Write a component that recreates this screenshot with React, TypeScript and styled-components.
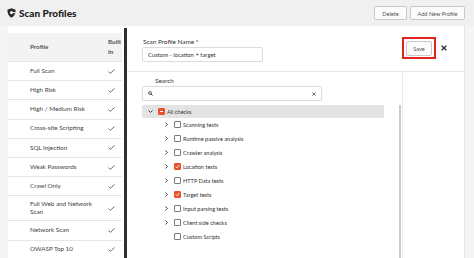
import React from 'react';
import styled, { createGlobalStyle, css } from 'styled-components';

const GlobalStyle = createGlobalStyle`
    html, body {
        margin: 0;
        padding: 0;
        background: #f5f5f5;
    }
    * {
        box-sizing: border-box;
    }
    body {
        font-family: Lato, 'Liberation Sans', sans-serif;
        color: #333;
    }
`;

const Page = styled.div`
    width: 474px;
    height: 258px;
    display: flex;
    flex-direction: column;
    overflow: hidden;
`;

const Header = styled.header`
    height: 26px;
    flex-shrink: 0;
    display: flex;
    align-items: center;
    justify-content: space-between;
    padding: 0 9px 0 7px;
    background: #f0f0f0;
`;

const Title = styled.h1`
    margin: 0;
    display: flex;
    align-items: center;
    gap: 3px;
    font-size: 10px;
    font-weight: 900;
    color: #222;
`;

const HeaderActions = styled.div`
    display: flex;
    gap: 3px;
`;

const Button = styled.button<{ $width: number; $height?: number }>`
    display: block;
    width: ${({ $width }) => $width}px;
    height: ${({ $height }) => $height ?? 14}px;
    padding: 0;
    font-family: inherit;
    font-size: 5.6px;
    color: #555;
    background: #fbfbfb;
    border: 1px solid #c9c9c9;
    border-radius: 2px;
`;

const Main = styled.main`
    flex: 1;
    display: flex;
    padding-left: 8px;
    min-height: 0;
`;

const ProfilePanel = styled.section`
    width: 116px;
    flex-shrink: 0;
    padding: 7px 2px 0 0;
    background: #fff;
`;

const TableRow = styled.div<{ $head?: boolean }>`
    display: flex;
    align-items: center;
    min-height: 19.2px;
    padding: 3.5px 0;
    border-bottom: 1px solid #e6e6e6;
    font-size: 6.3px;
    line-height: 8.5px;
    color: #444;
    ${({ $head }) =>
        $head &&
        css`
            min-height: 29px;
            background: #f3f3f3;
            font-weight: 700;
            line-height: 10px;
            color: #555;
        `}
`;

const NameCell = styled.div`
    flex: 1;
    padding-left: 22px;
    padding-right: 8px;
`;

const BuiltCell = styled.div`
    width: 14px;
    flex-shrink: 0;
    display: flex;
    align-items: center;
`;

const Divider = styled.div`
    width: 3px;
    margin-top: 2px;
    flex-shrink: 0;
    background: #2e2e2e;
`;

const Editor = styled.section`
    flex: 1;
    display: flex;
    flex-direction: column;
    margin-right: 9px;
    background: #fff;
    border-right: 1px solid #e6e6e6;
`;

const EditorTop = styled.div`
    height: 46px;
    flex-shrink: 0;
    display: flex;
    justify-content: space-between;
    padding: 12px 17px 0 15px;
    border-bottom: 1px solid #e6e6e6;
`;

const FieldLabel = styled.label<{ $indent?: number }>`
    display: block;
    margin-left: ${({ $indent }) => $indent ?? 1}px;
    font-size: 6.4px;
    line-height: 8px;
    color: #333;
`;

const TextBox = styled.div<{ $width: number }>`
    width: ${({ $width }) => $width}px;
    height: 15px;
    margin-top: 1px;
    display: flex;
    align-items: center;
    gap: 3px;
    padding: 0 5px;
    border: 1px solid #dcdcdc;
    border-radius: 2px;
    font-size: 5.9px;
    color: #333;
`;

const SaveArea = styled.div`
    display: flex;
    align-items: flex-start;
    gap: 5px;
    margin-top: -1px;
`;

const Highlight = styled.div`
    display: flex;
    padding: 1.5px 2px;
    border: 2px solid #e2231a;
`;

const CloseButton = styled.div`
    margin-top: 8px;
    display: flex;
`;

const EditorBody = styled.div`
    flex: 1;
    display: flex;
    min-height: 0;
`;

const TreeColumn = styled.div`
    width: 276px;
    flex-shrink: 0;
    display: flex;
    flex-direction: column;
    padding: 5px 0 0 15px;
    border-right: 1px solid #ececec;
`;

const ClearIcon = styled.span`
    margin-left: auto;
    display: flex;
`;

const TreeBox = styled.div`
    flex: 1;
    margin: 4px 1px 0 0;
    padding: 0 15px 0 0;
    border-right: 2px solid #cbcbcb;
`;

const TreeRow = styled.div<{ $level: number; $selected?: boolean }>`
    display: flex;
    align-items: center;
    height: ${({ $level }) => ($level === 0 ? 13 : 13.9)}px;
    padding-left: ${({ $level }) => 4 + $level * 16}px;
    font-size: 5.6px;
    color: #333;
    border-radius: 1px;
    ${({ $selected }) =>
        $selected &&
        css`
            background: #e3e3e3;
        `}
`;

const Chevron = styled.span`
    width: 8px;
    flex-shrink: 0;
    display: flex;
    justify-content: center;
    margin-right: 4px;
`;

const Box = styled.span<{ $on?: boolean }>`
    width: 7px;
    height: 7px;
    flex-shrink: 0;
    display: flex;
    align-items: center;
    justify-content: center;
    margin-right: 2px;
    border: 1px solid #7a7a7a;
    border-radius: 1px;
    background: #fff;
    ${({ $on }) =>
        $on &&
        css`
            border-color: #e8532b;
            background: #e8532b;
        `}
`;

const SideColumn = styled.div`
    flex: 1;
`;

const profiles = [
    'Full Scan',
    'High Risk',
    'High / Medium Risk',
    'Cross-site Scripting',
    'SQL Injection',
    'Weak Passwords',
    'Crawl Only',
    'Full Web and Network Scan',
    'Network Scan',
    'OWASP Top 10',
];

type Check = { label: string; checked?: boolean; leaf?: boolean };

const checks: Check[] = [
    { label: 'Scanning tests' },
    { label: 'Runtime passive analysis' },
    { label: 'Crawler analysis' },
    { label: 'Location tests', checked: true },
    { label: 'HTTP Data tests' },
    { label: 'Target tests', checked: true },
    { label: 'Input parsing tests' },
    { label: 'Client side checks' },
    { label: 'Custom Scripts', leaf: true },
];

const ShieldIcon = () => (
    <svg width='9' height='10' viewBox='0 0 9 10'>
        <path d='M4.5 0.3 L8.6 1.8 C8.6 5.6 7.2 8.4 4.5 9.7 C1.8 8.4 0.4 5.6 0.4 1.8 Z' fill='#2a2a2a' />
        <circle cx='4.5' cy='4.6' r='1.6' fill='#f0f0f0' />
        <path d='M4.5 4.6 L8 4.6' stroke='#f0f0f0' strokeWidth='1' />
    </svg>
);

const Tick = () => (
    <svg width='7' height='5' viewBox='0 0 7 5'>
        <polyline points='0.5,2.6 2.4,4.3 6.5,0.5' fill='none' stroke='#444' strokeWidth='0.8' />
    </svg>
);

const XIcon = ({ size, weight }: { size: number; weight: number }) => (
    <svg width={size} height={size} viewBox='0 0 6 6'>
        <path d='M0.6 0.6 L5.4 5.4 M5.4 0.6 L0.6 5.4' stroke='#222' strokeWidth={weight} />
    </svg>
);

const SearchIcon = () => (
    <svg width='5' height='5' viewBox='0 0 5 5'>
        <circle cx='2' cy='2' r='1.4' fill='none' stroke='#333' strokeWidth='0.8' />
        <path d='M3 3 L4.6 4.6' stroke='#333' strokeWidth='0.9' />
    </svg>
);

const ChevronRight = () => (
    <svg width='3' height='5' viewBox='0 0 3 5'>
        <polyline points='0.5,0.5 2.4,2.5 0.5,4.5' fill='none' stroke='#333' strokeWidth='0.9' />
    </svg>
);

const ChevronDown = () => (
    <svg width='5' height='3' viewBox='0 0 5 3'>
        <polyline points='0.5,0.5 2.5,2.4 4.5,0.5' fill='none' stroke='#333' strokeWidth='0.9' />
    </svg>
);

const CheckMark = () => (
    <svg width='5' height='5' viewBox='0 0 5 5'>
        <polyline points='0.8,2.6 2,3.8 4.2,1' fill='none' stroke='#fff' strokeWidth='0.9' />
    </svg>
);

const Minus = () => (
    <svg width='5' height='5' viewBox='0 0 5 5'>
        <path d='M1 2.5 L4 2.5' stroke='#fff' strokeWidth='1' />
    </svg>
);

const App: React.FC = () => (
    <>
        <GlobalStyle />
        <Page>
            <Header>
                <Title>
                    <ShieldIcon />
                    Scan Profiles
                </Title>
                <HeaderActions>
                    <Button $width={33}>Delete</Button>
                    <Button $width={55}>Add New Profile</Button>
                </HeaderActions>
            </Header>
            <Main>
                <ProfilePanel>
                    <TableRow $head>
                        <NameCell>Profile</NameCell>
                        <BuiltCell>
                            Built
                            <br />
                            In
                        </BuiltCell>
                    </TableRow>
                    {profiles.map(name => (
                        <TableRow key={name}>
                            <NameCell>{name}</NameCell>
                            <BuiltCell>
                                <Tick />
                            </BuiltCell>
                        </TableRow>
                    ))}
                </ProfilePanel>
                <Divider />
                <Editor>
                    <EditorTop>
                        <div>
                            <FieldLabel>Scan Profile Name *</FieldLabel>
                            <TextBox $width={121}>Custom - location + target</TextBox>
                        </div>
                        <SaveArea>
                            <Highlight>
                                <Button $width={26} $height={15}>
                                    Save
                                </Button>
                            </Highlight>
                            <CloseButton>
                                <XIcon size={6} weight={1.3} />
                            </CloseButton>
                        </SaveArea>
                    </EditorTop>
                    <EditorBody>
                        <TreeColumn>
                            <FieldLabel $indent={13}>Search</FieldLabel>
                            <TextBox $width={180}>
                                <SearchIcon />
                                <ClearIcon>
                                    <XIcon size={4} weight={1} />
                                </ClearIcon>
                            </TextBox>
                            <TreeBox>
                                <TreeRow $level={0} $selected>
                                    <Chevron>
                                        <ChevronDown />
                                    </Chevron>
                                    <Box $on>
                                        <Minus />
                                    </Box>
                                    All checks
                                </TreeRow>
                                {checks.map(item => (
                                    <TreeRow key={item.label} $level={1}>
                                        <Chevron>{!item.leaf && <ChevronRight />}</Chevron>
                                        <Box $on={item.checked}>{item.checked && <CheckMark />}</Box>
                                        {item.label}
                                    </TreeRow>
                                ))}
                            </TreeBox>
                        </TreeColumn>
                        <SideColumn />
                    </EditorBody>
                </Editor>
            </Main>
        </Page>
    </>
);

export default App;
